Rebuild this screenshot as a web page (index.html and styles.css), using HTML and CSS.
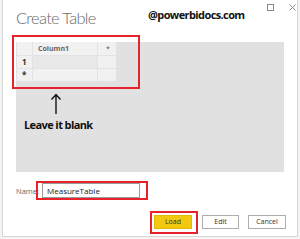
FILE: index.html
```html
<!DOCTYPE html>
<html>
<head>
<meta charset="utf-8">
<link rel="stylesheet" href="styles.css">
</head>
<body>
<div class="window">
  <div class="titlebar">
    <div class="title">Create Table</div>
    <div class="watermark">@powerbidocs.com</div>
    <div class="controls">
      <svg class="ctl" width="8" height="8" viewBox="0 0 8 8"><rect x="0.5" y="0.5" width="6" height="6" fill="none" stroke="#8a8a8a" stroke-width="1"/></svg>
      <svg class="ctl" width="8" height="8" viewBox="0 0 8 8"><path d="M0.5 0.5 L6.5 6.5 M6.5 0.5 L0.5 6.5" stroke="#8a8a8a" stroke-width="1"/></svg>
    </div>
  </div>
  <div class="grid-area">
    <div class="sheet">
      <div class="cell head"></div>
      <div class="cell head col">Column1</div>
      <div class="cell head star">*</div>
      <div class="cell rowh">1</div>
      <div class="cell sel"></div>
      <div class="cell"></div>
      <div class="cell rowh">*</div>
      <div class="cell"></div>
      <div class="cell"></div>
    </div>
    <svg class="arrow" width="12" height="22" viewBox="0 0 12 22"><path d="M6 1.5 V21 M1.5 6.5 L6 1.5 L10.5 6.5" fill="none" stroke="#111" stroke-width="1.4"/></svg>
    <div class="note">Leave it blank</div>
  </div>
  <div class="name-row">
    <span class="name-label">Name:</span>
    <div class="name-input">MeasureTable</div>
  </div>
  <div class="buttons">
    <div class="btn primary">Load</div>
    <div class="btn">Edit</div>
    <div class="btn">Cancel</div>
  </div>
  <div class="mark mark-table"></div>
  <div class="mark mark-name"></div>
  <div class="mark mark-load"></div>
</div>
</body>
</html>
```

FILE: styles.css
```css
html, body {
  margin: 0;
  padding: 0;
  background: #f4f4f4;
}
body {
  width: 300px;
  height: 239px;
  overflow: hidden;
  font-family: "Open Sans", "DejaVu Sans", sans-serif;
}
.window {
  position: relative;
  box-sizing: border-box;
  margin-left: 2px;
  width: 296px;
  height: 237px;
  background: #fff;
  border: 1px solid #d6d6d6;
  border-top: none;
  padding-right: 11px;
}
.titlebar {
  position: relative;
  height: 42px;
}
.title {
  padding: 8px 0 0 13px;
  font-family: "Lato", "Open Sans", sans-serif;
  font-size: 16.5px;
  line-height: 20px;
  font-weight: 300;
  color: #6a6a6a;
  letter-spacing: -0.7px;
}
.watermark {
  position: absolute;
  left: 145px;
  top: 8px;
  font-size: 11px;
  line-height: 14px;
  font-weight: 700;
  color: #111;
  letter-spacing: -0.6px;
}
.controls {
  position: absolute;
  right: -11px;
  top: 4px;
  display: flex;
  gap: 14px;
}
.ctl { display: block; }
.grid-area {
  margin-left: 13px;
  width: 268px;
  height: 130px;
  box-sizing: border-box;
  background: #e1e1e1;
  padding-left: 1px;
  display: flex;
  flex-direction: column;
  align-items: flex-start;
}
.sheet {
  display: grid;
  grid-template-columns: 15px 64px 18px;
  grid-template-rows: 13px 12px 12px;
  gap: 1px;
  background: #e3e3e3;
  padding-right: 1px;
  padding-bottom: 1px;
}
.cell {
  background: #f1f1f1;
  font-size: 7px;
  line-height: 12px;
  font-weight: 700;
  color: #555;
}
.head { line-height: 13px; }
.col { padding-left: 5px; color: #666; }
.star { text-align: center; font-weight: 400; padding-left: 2px; }
.rowh { padding-left: 5px; color: #333; font-size: 8px; }
.sel { background: #e8e8e8; }
.arrow {
  display: block;
  margin: 11px 0 0 33px;
}
.note {
  margin: 3px 0 0 7px;
  font-size: 11px;
  line-height: 14px;
  font-weight: 700;
  color: #111;
  letter-spacing: -0.6px;
}
.name-row {
  display: flex;
  align-items: center;
  margin-top: 11px;
  margin-left: 13px;
}
.name-label {
  font-size: 7.5px;
  color: #666;
  width: 26px;
}
.name-input {
  box-sizing: border-box;
  width: 98px;
  height: 15px;
  border: 1px solid #9a9a9a;
  font-size: 8px;
  line-height: 13px;
  padding-left: 4px;
  color: #222;
}
.buttons {
  display: flex;
  justify-content: flex-end;
  gap: 9px;
  margin-top: 17px;
}
.btn {
  box-sizing: border-box;
  width: 37px;
  height: 14px;
  border: 1px solid #adadad;
  background: #fff;
  font-size: 7px;
  line-height: 12px;
  text-align: center;
  color: #333;
}
.btn.primary {
  width: 38px;
  margin-right: 1px;
  background: #f2c811;
  border-color: #e2b800;
}
.btn:last-child { width: 38px; }
.mark {
  position: absolute;
  box-sizing: border-box;
  border: 2px solid #e8212b;
}
.mark-table { left: 9px; top: 35px; width: 128px; height: 54px; }
.mark-name { left: 33px; top: 181px; width: 112px; height: 19px; }
.mark-load { left: 147px; top: 211px; width: 48px; height: 23px; }
```
